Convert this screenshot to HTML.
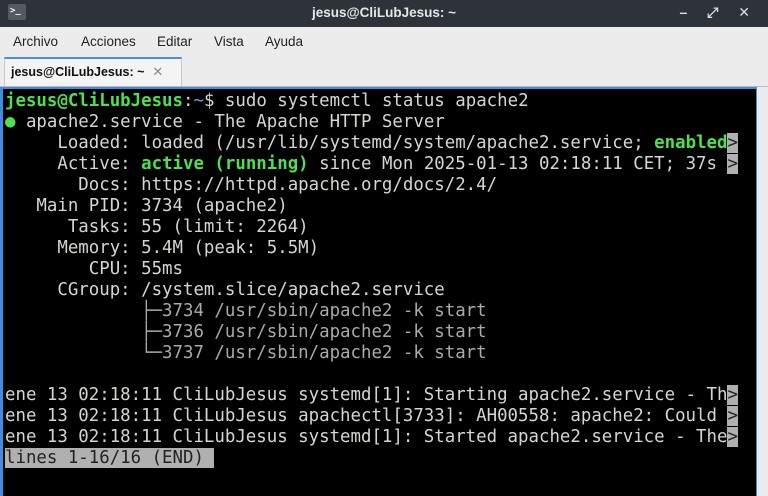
<!DOCTYPE html>
<html><head><meta charset="utf-8"><style>
*{margin:0;padding:0;box-sizing:border-box}
body{width:768px;height:496px;overflow:hidden;background:#ececec;font-family:"Liberation Sans","DejaVu Sans",sans-serif;position:relative}
#title{position:absolute;left:0;top:0;width:768px;height:27px;background:#2e3339;color:#e6e6e6;font-weight:bold;font-size:13.5px;text-align:center;line-height:25px}
#ticon{position:absolute;left:8px;top:4px;width:18px;height:16px;background:#555a60;border-radius:2px;color:#fff;font-size:9px;line-height:14px;text-align:left;padding-left:2px;font-family:"DejaVu Sans Mono",monospace}
#btns{position:absolute;right:10px;top:0;font-size:14px;color:#ddd;letter-spacing:8px}
#menu{position:absolute;top:27px;left:0;width:768px;height:30px;font-size:13.5px;color:#222;line-height:30px}
#menu span{position:absolute}
#tabbar{position:absolute;top:57px;left:0;width:768px;height:30px;border-bottom:1px solid #bbb}
#tab{position:absolute;left:4px;top:0;width:178px;height:29px;background:#f4f4f4;border:1px solid #c8c8c8;border-top:2px solid #4a90d9;border-bottom:none;font-size:12.5px;font-weight:bold;color:#111;line-height:26px;padding-left:6px}
#tab i{font-style:normal;font-weight:normal;color:#888;margin-left:8px;font-size:13px}
#term{position:absolute;left:0;top:87px;width:757px;height:409px;background:#000;border-left:3px solid #3d8ee0;border-top:2px solid #3d8ee0;border-right:1px solid #3d8ee0}
pre{position:absolute;left:2px;top:2px;font-family:"DejaVu Sans Mono",monospace;font-size:17.4px;line-height:21px;color:#d3d7cf;white-space:pre}
.g{color:#4ee04e;font-weight:bold}
.d{color:#aaa}
.t{background:#b0b0b0;color:#222}
.dot{color:#4ee04e}
</style></head><body>
<div id="title"><div id="ticon">&gt;_</div>jesus@CliLubJesus: ~<div id="btns">– ⤢ ✕</div></div>
<div id="menu"><span style="left:13px">Archivo</span><span style="left:81px">Acciones</span><span style="left:157px">Editar</span><span style="left:214px">Vista</span><span style="left:265px">Ayuda</span></div>
<div id="tabbar"><div id="tab">jesus@CliLubJesus: ~<i>✕</i></div></div>
<div id="term"><pre><span class="g">jesus@CliLubJesus</span>:<span style="color:#6fa0e0">~</span>$ sudo systemctl status apache2
<span class="dot">●</span> apache2.service - The Apache HTTP Server
     Loaded: loaded (/usr/lib/systemd/system/apache2.service; <span class="g">enabled</span><span class="t">&gt;</span>
     Active: <span class="g">active (running)</span> since Mon 2025-01-13 02:18:11 CET; 37s <span class="t">&gt;</span>
       Docs: https://httpd.apache.org/docs/2.4/
   Main PID: 3734 (apache2)
      Tasks: 55 (limit: 2264)
     Memory: 5.4M (peak: 5.5M)
        CPU: 55ms
     CGroup: /system.slice/apache2.service
<span class="d">             ├─3734 /usr/sbin/apache2 -k start
             ├─3736 /usr/sbin/apache2 -k start
             └─3737 /usr/sbin/apache2 -k start</span>

ene 13 02:18:11 CliLubJesus systemd[1]: Starting apache2.service - Th<span class="t">&gt;</span>
ene 13 02:18:11 CliLubJesus apachectl[3733]: AH00558: apache2: Could <span class="t">&gt;</span>
ene 13 02:18:11 CliLubJesus systemd[1]: Started apache2.service - The<span class="t">&gt;</span>
<span class="t">lines 1-16/16 (END)</span><span class="t"> </span></pre></div>
</body></html>
